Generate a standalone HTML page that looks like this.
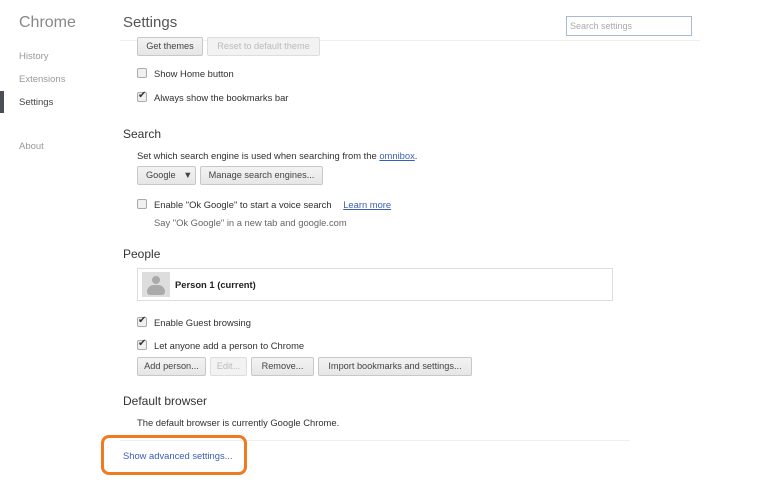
<!DOCTYPE html>
<html><head><meta charset="utf-8"><style>
*{margin:0;padding:0;box-sizing:border-box}
body{width:780px;height:482px;background:#fff;font-family:"Liberation Sans",sans-serif;position:relative;overflow:hidden;color:#303030}
.a{position:absolute;white-space:nowrap}
.s{font-size:9.4px}
.nav{font-size:9.5px;color:#999}
.h{font-size:12px;color:#333}
.btn{position:absolute;height:19px;border:1px solid #c8c8c8;border-radius:2px;background:linear-gradient(#f3f3f3,#e6e6e6);font-size:9.2px;color:#444;text-align:center;line-height:17px}
.dis{color:#bbb;background:#f2f2f2;border-color:#ddd}
.cb{position:absolute;width:10px;height:10px;border:1px solid #aaa;border-radius:2px;background:#f0f0f0}
.ck::after{content:"✔";position:absolute;left:0px;top:-3px;font-size:10px;color:#333}
</style></head><body>
<div class="a" style="left:19px;top:14px;font-size:16px;color:#888">Chrome</div>
<div class="a nav" style="left:19px;top:51px">History</div>
<div class="a nav" style="left:19px;top:74px">Extensions</div>
<div class="a nav" style="left:19px;top:97px;color:#444">Settings</div>
<div class="a nav" style="left:19px;top:141px">About</div>
<div class="a" style="left:0;top:91px;width:4px;height:22px;background:#4a4f55"></div>
<div class="a" style="left:123px;top:14px;font-size:15px;color:#555">Settings</div>
<div class="a" style="left:120px;top:40px;width:580px;height:1px;background:#eee"></div>
<div class="a" style="left:566px;top:16px;width:126px;height:20px;border:1px solid #a7bad6;font-size:9px;color:#aaa;padding:4px 3px">Search settings</div>

<div class="btn" style="left:137px;top:37px;width:66px">Get themes</div>
<div class="btn dis" style="left:207px;top:37px;width:113px">Reset to default theme</div>
<div class="cb" style="left:137px;top:68px"></div><div class="a s" style="left:154px;top:68px">Show Home button</div>
<div class="cb ck" style="left:137px;top:92px"></div><div class="a s" style="left:154px;top:92px">Always show the bookmarks bar</div>

<div class="a h" style="left:123px;top:127px">Search</div>
<div class="a s" style="left:137px;top:150px">Set which search engine is used when searching from the <span style="color:#3b5fb3;text-decoration:underline">omnibox</span>.</div>
<div class="btn" style="left:137px;top:166px;width:59px;text-align:left;padding-left:8px">Google &nbsp;&nbsp;▼</div>
<div class="btn" style="left:200px;top:166px;width:123px">Manage search engines...</div>
<div class="cb" style="left:137px;top:199px"></div><div class="a s" style="left:154px;top:199px">Enable "Ok Google" to start a voice search <span style="margin-left:9px;color:#3b5fb3;text-decoration:underline">Learn more</span></div>
<div class="a s" style="left:154px;top:217px;color:#666">Say "Ok Google" in a new tab and google.com</div>

<div class="a h" style="left:123px;top:247px">People</div>
<div class="a" style="left:137px;top:268px;width:476px;height:33px;border:1px solid #ddd"></div>
<div class="a" style="left:142px;top:272px;width:28px;height:25px;background:#ddd;overflow:hidden">
<div class="a" style="left:10px;top:4px;width:8px;height:8px;border-radius:50%;background:#aaa"></div>
<div class="a" style="left:5px;top:13px;width:18px;height:10px;border-radius:9px 9px 4px 4px;background:#aaa"></div></div>
<div class="a s" style="left:175px;top:279px;font-weight:bold;color:#222">Person 1 (current)</div>
<div class="cb ck" style="left:137px;top:317px"></div><div class="a s" style="left:154px;top:317px">Enable Guest browsing</div>
<div class="cb ck" style="left:137px;top:340px"></div><div class="a s" style="left:154px;top:340px">Let anyone add a person to Chrome</div>
<div class="btn" style="left:137px;top:357px;width:69px">Add person...</div>
<div class="btn dis" style="left:210px;top:357px;width:37px">Edit...</div>
<div class="btn" style="left:251px;top:357px;width:63px">Remove...</div>
<div class="btn" style="left:318px;top:357px;width:154px">Import bookmarks and settings...</div>

<div class="a h" style="left:123px;top:394px">Default browser</div>
<div class="a s" style="left:137px;top:417px">The default browser is currently Google Chrome.</div>
<div class="a" style="left:120px;top:440px;width:510px;height:1px;background:#eee"></div>
<div class="a s" style="left:123px;top:450px;color:#3b5fb3">Show advanced settings...</div>
<div class="a" style="left:101px;top:435px;width:146px;height:40px;border:3px solid #ee7a22;border-radius:8px"></div>
</body></html>
